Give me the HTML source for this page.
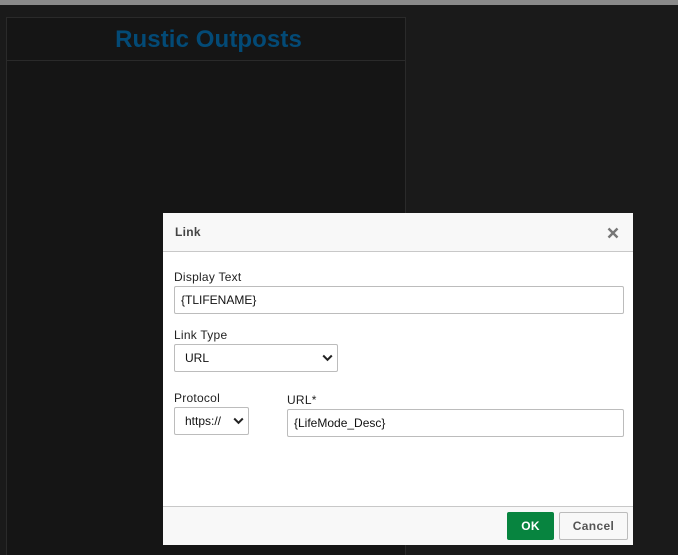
<!DOCTYPE html>
<html>
<head>
<meta charset="utf-8">
<style>
html,body{margin:0;padding:0;width:678px;height:555px;overflow:hidden;background:#1a1a1a;font-family:"Liberation Sans",Arial,sans-serif;}
.a{position:absolute;box-sizing:border-box;}
.t{position:absolute;white-space:nowrap;font-size:12px;line-height:14px;color:#222;letter-spacing:.25px;}
.box{position:absolute;box-sizing:border-box;background:#fff;border:1px solid #bcbcbc;border-radius:2px;}
</style>
</head>
<body>
<div class="a" style="left:0;top:0;width:678px;height:5px;background:#8a8a8a"></div>
<div class="a" style="left:6px;top:17px;width:400px;height:538px;background:#151515;border:1px solid #2a2a2a;border-bottom:0"></div>
<div class="a" style="left:7px;top:60px;width:398px;height:1px;background:#2a2a2a"></div>
<div class="t" style="left:7px;top:25px;width:403px;text-align:center;font-size:24px;line-height:30px;font-weight:bold;color:#034a76;letter-spacing:.1px">Rustic Outposts</div>

<div class="a" style="left:163px;top:213px;width:470px;height:332px;background:#fff"></div>
<div class="a" style="left:163px;top:213px;width:470px;height:39px;background:#f8f8f8;border-bottom:1px solid #c8c8c8"></div>
<div class="t" style="left:175px;top:225px;font-size:12px;font-weight:bold;color:#444;letter-spacing:.3px">Link</div>
<svg class="a" style="left:607px;top:227px" width="12" height="12" viewBox="0 0 12 12"><path d="M1.5 1.5L10.5 10.5M10.5 1.5L1.5 10.5" stroke="#777" stroke-width="2.4" fill="none"/></svg>

<div class="t" style="left:174px;top:270px">Display Text</div>
<div class="box" style="left:174px;top:286px;width:450px;height:28px"></div>
<div class="t" style="left:181px;top:293px;color:#111;letter-spacing:0">{TLIFENAME}</div>

<div class="t" style="left:174px;top:328px">Link Type</div>
<div class="box" style="left:174px;top:344px;width:164px;height:28px"></div>
<div class="t" style="left:185px;top:351px;color:#111;letter-spacing:0">URL</div>
<svg class="a" style="left:322px;top:354px" width="11" height="8" viewBox="0 0 11 8"><path d="M1.2 1.5L5.5 5.8L9.8 1.5" stroke="#222" stroke-width="2" fill="none"/></svg>

<div class="t" style="left:174px;top:391px">Protocol</div>
<div class="box" style="left:174px;top:407px;width:75px;height:28px"></div>
<div class="t" style="left:185px;top:414px;color:#111;letter-spacing:0">https://</div>
<svg class="a" style="left:233px;top:417px" width="11" height="8" viewBox="0 0 11 8"><path d="M1.2 1.5L5.5 5.8L9.8 1.5" stroke="#222" stroke-width="2" fill="none"/></svg>

<div class="t" style="left:287px;top:393px">URL*</div>
<div class="box" style="left:287px;top:409px;width:337px;height:28px"></div>
<div class="t" style="left:294px;top:416px;color:#111;letter-spacing:0">{LifeMode_Desc}</div>

<div class="a" style="left:163px;top:506px;width:470px;height:39px;background:#f8f8f8;border-top:1px solid #c8c8c8"></div>
<div class="a" style="left:507px;top:512px;width:47px;height:28px;background:#07843f;border-radius:2px"></div>
<div class="t" style="left:507px;top:519px;width:47px;text-align:center;font-weight:bold;color:#fff;letter-spacing:.2px">OK</div>
<div class="a" style="left:559px;top:512px;width:69px;height:28px;background:#f8f8f8;border:1px solid #bcbcbc;border-radius:2px"></div>
<div class="t" style="left:559px;top:519px;width:69px;text-align:center;font-weight:bold;color:#555;letter-spacing:.35px">Cancel</div>
</body>
</html>
